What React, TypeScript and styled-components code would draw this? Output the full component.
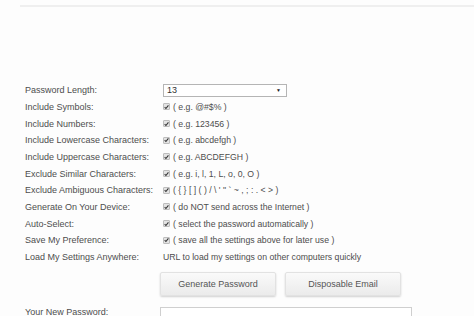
import React from "react";
import styled, { createGlobalStyle } from "styled-components";

const GlobalStyle = createGlobalStyle`
  html, body {
    margin: 0;
    padding: 0;
    background: #fdfdfd;
  }
  body {
    font-family: "Liberation Sans", Arial, sans-serif;
    color: #444;
    width: 474px;
    height: 316px;
    overflow: hidden;
  }
`;

const Page = styled.div`
  width: 474px;
  height: 316px;
  overflow: hidden;
`;

const TopRule = styled.div`
  margin: 5px 0 0 20px;
  height: 2px;
  background: #efefef;
`;

const Form = styled.div`
  display: grid;
  grid-template-columns: 138px 1fr;
  grid-auto-rows: 16.67px;
  align-items: center;
  padding: 75px 0 0 25px;
  font-size: 9px;
`;

const Label = styled.div`
  color: #4d4d4d;
  white-space: nowrap;
`;

const Value = styled.div`
  display: flex;
  align-items: center;
  gap: 3px;
  color: #4d4d4d;
  white-space: nowrap;
  font-size: 8.7px;
`;

const Select = styled.div`
  width: 114px;
  height: 11px;
  border: 1px solid #b5b5b5;
  background: #fff;
  display: flex;
  align-items: center;
  justify-content: space-between;
  padding: 0 5px 0 3px;
  box-sizing: content-box;
  font-size: 9px;
  color: #333;
`;

const Arrow = styled.span`
  font-size: 5px;
  color: #222;
`;

const Box = styled.span`
  width: 7px;
  height: 7px;
  background: #e4e4e4;
  border: 1px solid #bdbdbd;
  border-radius: 1px;
  display: inline-flex;
  align-items: center;
  justify-content: center;
  box-sizing: border-box;
`;

const ButtonRow = styled.div`
  display: flex;
  gap: 9px;
  padding: 7px 0 0 160px;
`;

const Button = styled.div`
  width: 116px;
  height: 24px;
  box-sizing: border-box;
  display: flex;
  align-items: center;
  justify-content: center;
  font-size: 9px;
  color: #555;
  background: linear-gradient(#fafafa, #ebebeb);
  border: 1px solid #e2e2e2;
  border-radius: 2px;
  box-shadow: 0 1px 2px rgba(0, 0, 0, 0.18);
`;

const OutputRow = styled.div`
  display: grid;
  grid-template-columns: 135px 252px;
  padding: 11px 0 0 25px;
  font-size: 9px;
`;

const OutputField = styled.div`
  height: 20px;
  border: 1px solid #cfcfcf;
  background: #fff;
`;

const Check = () => (
  <Box>
    <svg width="6" height="6" viewBox="0 0 6 6">
      <path d="M0.8 3.2 L2.3 4.8 L5.3 1" stroke="#333" strokeWidth="1.3" fill="none" />
    </svg>
  </Box>
);

const options: [string, string][] = [
  ["Include Symbols:", "( e.g. @#$% )"],
  ["Include Numbers:", "( e.g. 123456 )"],
  ["Include Lowercase Characters:", "( e.g. abcdefgh )"],
  ["Include Uppercase Characters:", "( e.g. ABCDEFGH )"],
  ["Exclude Similar Characters:", "( e.g. i, l, 1, L, o, 0, O )"],
  ["Exclude Ambiguous Characters:", "( { } [ ] ( ) / \\ ' \" ` ~ , ; : . < > )"],
  ["Generate On Your Device:", "( do NOT send across the Internet )"],
  ["Auto-Select:", "( select the password automatically )"],
  ["Save My Preference:", "( save all the settings above for later use )"],
];

export default function App() {
  return (
    <Page>
      <GlobalStyle />
      <TopRule />
      <Form>
        <Label>Password Length:</Label>
        <Value>
          <Select>
            <span>13</span>
            <Arrow>▼</Arrow>
          </Select>
        </Value>
        {options.map(([label, hint]) => (
          <React.Fragment key={label}>
            <Label>{label}</Label>
            <Value>
              <Check />
              <span>{hint}</span>
            </Value>
          </React.Fragment>
        ))}
        <Label>Load My Settings Anywhere:</Label>
        <Value>URL to load my settings on other computers quickly</Value>
      </Form>
      <ButtonRow>
        <Button>Generate Password</Button>
        <Button>Disposable Email</Button>
      </ButtonRow>
      <OutputRow>
        <Label>Your New Password:</Label>
        <OutputField />
      </OutputRow>
    </Page>
  );
}
